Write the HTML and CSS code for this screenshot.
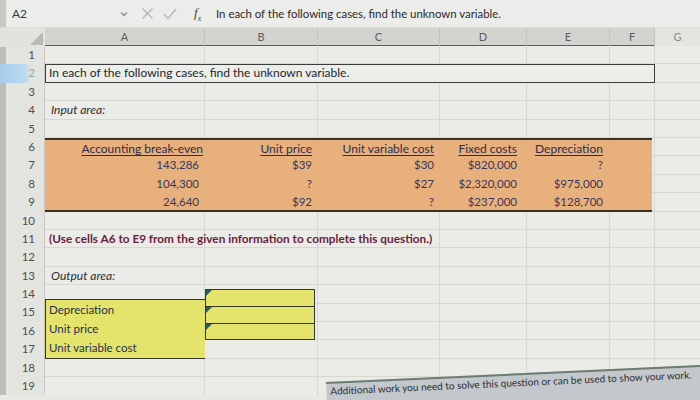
FILE: index.html
```html
<!DOCTYPE html>
<html>
<head>
<meta charset="utf-8">
<link rel="stylesheet" href="styles.css">
</head>
<body>
<div class="app">
  <div class="fbar">
    <span class="namebox">A2</span>
    <span class="fb-icons">
      <svg class="chev" width="8" height="6" viewBox="0 0 8 6"><path d="M1 1.5 L4 4.5 L7 1.5" fill="none" stroke="#8a8a8a" stroke-width="1.3"/></svg>
      <svg class="xic" width="13" height="13" viewBox="0 0 13 13"><path d="M1.5 1.5 L11.5 11.5 M11.5 1.5 L1.5 11.5" fill="none" stroke="#b4b4b2" stroke-width="1.2"/></svg>
      <svg class="ckic" width="14" height="12" viewBox="0 0 14 12"><path d="M1 6 L5 10.5 L13 1" fill="none" stroke="#b4b4b2" stroke-width="1.2"/></svg>
      <span class="fx">f<sub>x</sub></span>
    </span>
    <span class="formula">In each of the following cases, find the unknown variable.</span>
  </div>

  <div class="colhead">
    <div class="corner"><span class="tri"></span></div>
    <div class="ch ca">A</div>
    <div class="ch cb">B</div>
    <div class="ch cc">C</div>
    <div class="ch cd">D</div>
    <div class="ch ce">E</div>
    <div class="ch cf">F</div>
    <div class="ch cg">G</div>
  </div>

  <div class="body">
    <div class="rowheads">
      <div class="rh">1</div>
      <div class="rh sel">2</div>
      <div class="rh">3</div>
      <div class="rh">4</div>
      <div class="rh">5</div>
      <div class="rh">6</div>
      <div class="rh">7</div>
      <div class="rh">8</div>
      <div class="rh">9</div>
      <div class="rh">10</div>
      <div class="rh">11</div>
      <div class="rh">12</div>
      <div class="rh">13</div>
      <div class="rh">14</div>
      <div class="rh">15</div>
      <div class="rh">16</div>
      <div class="rh">17</div>
      <div class="rh">18</div>
      <div class="rh">19</div>
    </div>

    <div class="sheet">
      <div class="title">In each of the following cases, find the unknown variable.</div>

      <div class="lbl r4">Input area:</div>

      <div class="inbg"></div>
      <div class="c hd r6 k1">Accounting break-even</div>
      <div class="c hd r6 k2">Unit price</div>
      <div class="c hd r6 k3">Unit variable cost</div>
      <div class="c hd r6 k4">Fixed costs</div>
      <div class="c hd r6 k5">Depreciation</div>

      <div class="c r7 k1">143,286</div>
      <div class="c r7 k2">$39</div>
      <div class="c r7 k3">$30</div>
      <div class="c r7 k4">$820,000</div>
      <div class="c r7 k5">?</div>

      <div class="c r8 k1">104,300</div>
      <div class="c r8 k2">?</div>
      <div class="c r8 k3">$27</div>
      <div class="c r8 k4">$2,320,000</div>
      <div class="c r8 k5">$975,000</div>

      <div class="c r9 k1">24,640</div>
      <div class="c r9 k2">$92</div>
      <div class="c r9 k3">?</div>
      <div class="c r9 k4">$237,000</div>
      <div class="c r9 k5">$128,700</div>

      <div class="note">(Use cells A6 to E9 from the given information to complete this question.)</div>

      <div class="lbl r13">Output area:</div>

      <div class="outa">
        <div class="ol">Depreciation</div>
        <div class="ol">Unit price</div>
        <div class="ol">Unit variable cost</div>
      </div>
      <div class="outb">
        <div class="ob"><span class="flag"></span></div>
        <div class="ob"><span class="flag"></span></div>
        <div class="ob"><span class="flag"></span></div>
      </div>
    </div>
  </div>

  <div class="textbox"><span class="tbtext">Additional work you need to solve this question or can be used to show your work.</span></div>
</div>
</body>
</html>
```

FILE: styles.css
```css
* { box-sizing: border-box; }
html, body { margin: 0; padding: 0; }
body {
  width: 700px;
  height: 400px;
  overflow: hidden;
  background: #e8e9e4;
  font-family: Lato, "Open Sans", sans-serif;
  font-size: 12px;
  color: #2c2c36;
}
.app { position: relative; width: 700px; height: 400px; overflow: hidden; }

/* formula bar */
.fbar {
  height: 28px;
  display: flex;
  align-items: center;
  background: #ecedea;
  border-bottom: 1px solid #dcdcd8;
  box-shadow: inset 6px 0 0 #c9cac6;
}
.namebox { width: 112px; padding-left: 12px; font-size: 12px; color: #3a3a3a; }
.fb-icons { display: flex; align-items: center; width: 104px; }
.chev { margin-left: 8px; margin-right: 13px; }
.xic { margin-right: 9px; }
.ckic { margin-right: 17px; }
.fx { font-family: "Liberation Serif", serif; font-style: italic; font-size: 13px; color: #444; }
.fx sub { font-size: 8px; }
.formula { font-size: 11.4px; color: #2a2a2a; }

/* column header */
.colhead {
  height: 18px;
  display: grid;
  grid-template-columns: 45px 160px 113px 122px 87px 83px 45px 45px;
}
.corner { position: relative; background: #e2e3de; }
.tri {
  position: absolute; right: 2px; bottom: 2px;
  width: 0; height: 0;
  border-left: 13px solid transparent;
  border-bottom: 13px solid #b8b9b5;
}
.ch {
  background: #d3d4d0;
  border-bottom: 2px solid #5b5c58;
  border-right: 1px solid #c3c4c0;
  text-align: center;
  line-height: 17px;
  font-size: 11px;
  color: #5d5d5d;
}
.cg { background: #e4e5e0; border-bottom: 1px solid #cfd0cb; border-right: 0; color: #8a8a8a; }

/* body */
.body { display: flex; }
.rowheads {
  width: 45px;
  flex: none;
  background: #e3e4df;
  border-right: 1px solid #c8c9c4;
  box-shadow: inset 6px 0 0 #bdbeb9;
}
.rh {
  height: 18.4px;
  line-height: 18.4px;
  text-align: right;
  padding-right: 9px;
  font-size: 11.5px;
  color: #4e4e4e;
}
.rh.sel {
  background: linear-gradient(to right, #a9cdea 0, #bcdaf1 26px, #e3e4df 30px);
  color: #8aa;
}

.sheet {
  flex: 1;
  display: grid;
  grid-template-columns: 160px 113px 122px 87px 83px 45px 45px;
  grid-template-rows: repeat(19, 18.4px);
  background-color: #ebece7;
  background-image:
    repeating-linear-gradient(to bottom, transparent 0 17.4px, #d7d8d2 17.4px 18.4px),
    linear-gradient(to right,
      transparent 0 159px, #d7d8d2 159px 160px,
      transparent 160px 272px, #d7d8d2 272px 273px,
      transparent 273px 394px, #d7d8d2 394px 395px,
      transparent 395px 481px, #d7d8d2 481px 482px,
      transparent 482px 564px, #d7d8d2 564px 565px,
      transparent 565px 609px, #d7d8d2 609px 610px,
      transparent 610px);
}

.title {
  grid-row: 2;
  grid-column: 1 / 7;
  border: 1.5px solid #3b3b3b;
  background: #eceee9;
  padding-left: 3px;
  line-height: 15px;
  font-size: 12px;
  color: #262630;
  white-space: nowrap;
}

.lbl {
  grid-column: 1 / 3;
  font-style: italic;
  padding-left: 6px;
  line-height: 18.4px;
  color: #2c2c34;
}
.r4 { grid-row: 4; }
.r13 { grid-row: 13; }

.inbg {
  grid-row: 6 / 10;
  grid-column: 1 / 7;
  background: #e8b07d;
  border-top: 2px solid #3d3124;
  border-bottom: 2px solid #3d3124;
  margin-right: 3px;
}
.c {
  text-align: right;
  line-height: 18.4px;
  font-size: 11.5px;
  color: #3b3658;
  white-space: nowrap;
  padding-right: 6px;
}
.hd { text-decoration: underline; text-underline-offset: 2px; color: #2f2d4a; font-size: 12px; }
.r6 { grid-row: 6; padding-top: 2px; }
.r7 { grid-row: 7; }
.r8 { grid-row: 8; }
.r9 { grid-row: 9; }
.k1 { grid-column: 1; }
.hd.k1 { padding-right: 2px; }
.k2 { grid-column: 2; }
.k3 { grid-column: 3; }
.k4 { grid-column: 4; padding-right: 10px; }
.k5 { grid-column: 5; padding-right: 7px; }

.note {
  grid-row: 11;
  grid-column: 1 / 6;
  font-weight: 700;
  font-size: 11.8px;
  line-height: 18.4px;
  padding-left: 4px;
  color: #6a1d3c;
  white-space: nowrap;
}

.outa {
  grid-row: 15 / 18;
  grid-column: 1;
  margin-top: -4px;
  background: #e4e36c;
  border: 1.5px solid #36362a;
  border-right: 0;
  display: flex;
  flex-direction: column;
  justify-content: space-around;
}
.ol { padding-left: 3px; font-size: 11.5px; color: #27304c; line-height: 16px; }

.outb {
  grid-row: 14 / 17;
  grid-column: 2;
  margin-top: 4px;
  margin-right: 3px;
  background: #e4e36c;
  border: 1.5px solid #36362a;
  display: flex;
  flex-direction: column;
}
.ob {
  position: relative;
  flex: 1;
}
.ob + .ob { border-top: 1.5px solid #36362a; }
.flag {
  position: absolute; left: 0; top: 0;
  width: 0; height: 0;
  border-top: 6px solid #2e5b60;
  border-right: 6px solid transparent;
}

/* floating text box at the bottom */
.textbox {
  position: absolute;
  left: 326px;
  top: 382px;
  width: 420px;
  height: 40px;
  background: #c2c8cb;
  border-top: 2px solid #6e7c72;
  transform: rotate(-2.6deg);
  transform-origin: left top;
  overflow: hidden;
}
.tbtext {
  display: block;
  margin-left: 4px;
  margin-top: 1px;
  font-size: 10px;
  color: #2e2e34;
  white-space: nowrap;
}
```
